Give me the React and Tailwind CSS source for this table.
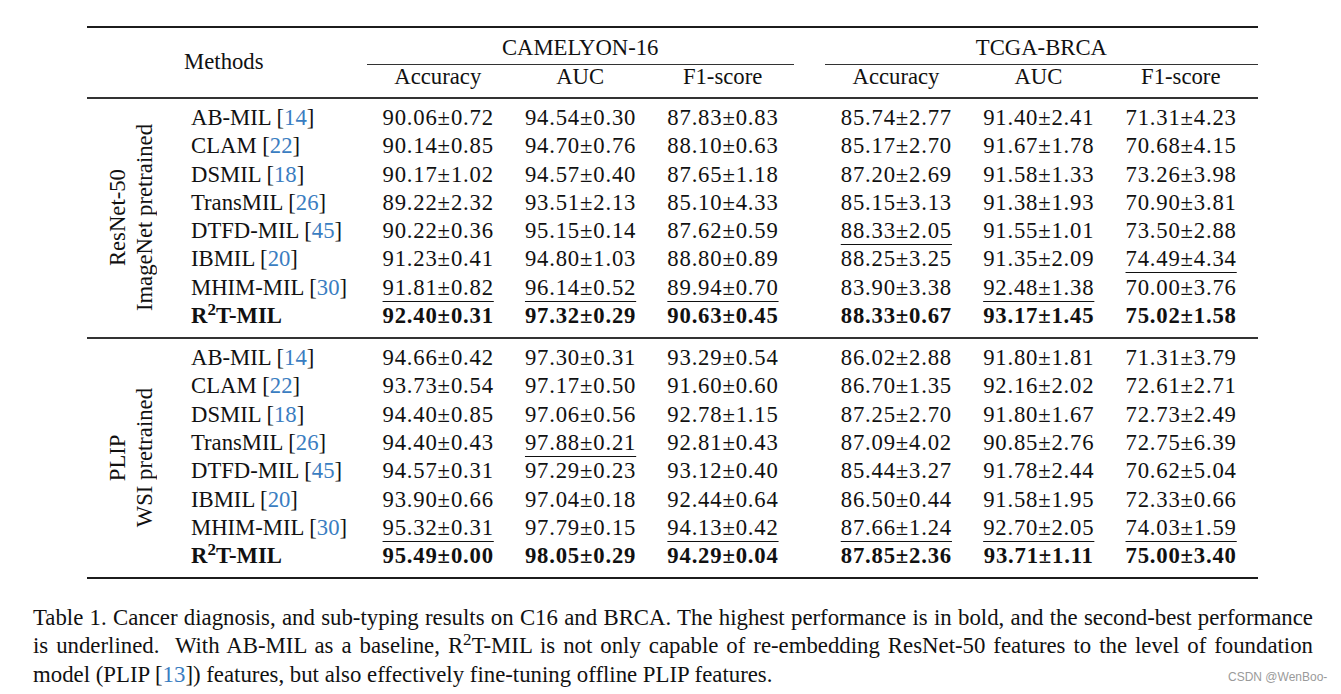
import React from "react";

const groups = [
  {
    label: ["ResNet-50", "ImageNet pretrained"],
    rows: [
      ["AB-MIL", "14", ["90.06±0.72", "94.54±0.30", "87.83±0.83", "85.74±2.77", "91.40±2.41", "71.31±4.23"], []],
      ["CLAM", "22", ["90.14±0.85", "94.70±0.76", "88.10±0.63", "85.17±2.70", "91.67±1.78", "70.68±4.15"], []],
      ["DSMIL", "18", ["90.17±1.02", "94.57±0.40", "87.65±1.18", "87.20±2.69", "91.58±1.33", "73.26±3.98"], []],
      ["TransMIL", "26", ["89.22±2.32", "93.51±2.13", "85.10±4.33", "85.15±3.13", "91.38±1.93", "70.90±3.81"], []],
      ["DTFD-MIL", "45", ["90.22±0.36", "95.15±0.14", "87.62±0.59", "88.33±2.05", "91.55±1.01", "73.50±2.88"], [3]],
      ["IBMIL", "20", ["91.23±0.41", "94.80±1.03", "88.80±0.89", "88.25±3.25", "91.35±2.09", "74.49±4.34"], [5]],
      ["MHIM-MIL", "30", ["91.81±0.82", "96.14±0.52", "89.94±0.70", "83.90±3.38", "92.48±1.38", "70.00±3.76"], [0, 1, 2, 4]],
    ],
    best: ["92.40±0.31", "97.32±0.29", "90.63±0.45", "88.33±0.67", "93.17±1.45", "75.02±1.58"],
  },
  {
    label: ["PLIP", "WSI pretrained"],
    rows: [
      ["AB-MIL", "14", ["94.66±0.42", "97.30±0.31", "93.29±0.54", "86.02±2.88", "91.80±1.81", "71.31±3.79"], []],
      ["CLAM", "22", ["93.73±0.54", "97.17±0.50", "91.60±0.60", "86.70±1.35", "92.16±2.02", "72.61±2.71"], []],
      ["DSMIL", "18", ["94.40±0.85", "97.06±0.56", "92.78±1.15", "87.25±2.70", "91.80±1.67", "72.73±2.49"], []],
      ["TransMIL", "26", ["94.40±0.43", "97.88±0.21", "92.81±0.43", "87.09±4.02", "90.85±2.76", "72.75±6.39"], [1]],
      ["DTFD-MIL", "45", ["94.57±0.31", "97.29±0.23", "93.12±0.40", "85.44±3.27", "91.78±2.44", "70.62±5.04"], []],
      ["IBMIL", "20", ["93.90±0.66", "97.04±0.18", "92.44±0.64", "86.50±0.44", "91.58±1.95", "72.33±0.66"], []],
      ["MHIM-MIL", "30", ["95.32±0.31", "97.79±0.15", "94.13±0.42", "87.66±1.24", "92.70±2.05", "74.03±1.59"], [0, 2, 3, 4, 5]],
    ],
    best: ["95.49±0.00", "98.05±0.29", "94.29±0.04", "87.85±2.36", "93.71±1.11", "75.00±3.40"],
  },
];

const Cells = ({ values, under = [], bold = false }) => (
  <>
    {values.map((v, i) => (
      <React.Fragment key={i}>
        {i === 3 && <div className="w-[31px] shrink-0" />}
        <div className="w-[142.4px] shrink-0 text-center">
          <span
            className={
              "tracking-[0.8px] mr-[-0.8px] " +
              (bold ? "font-bold " : "") +
              (under.includes(i) ? "underline decoration-1 underline-offset-[6px]" : "")
            }
          >
            {v}
          </span>
        </div>
      </React.Fragment>
    ))}
  </>
);

const Row = ({ children }) => (
  <div className="flex h-[28.3px] items-center leading-[28.3px] whitespace-nowrap">{children}</div>
);

const Group = ({ g }) => (
  <div className="flex pt-[5.5px] pb-[6.7px]">
    <div className="w-[87px] shrink-0 flex items-center justify-center">
      <div className="[writing-mode:vertical-rl] rotate-180 text-center leading-[27px] whitespace-nowrap">
        <div>{g.label[0]}</div>
        <div>{g.label[1]}</div>
      </div>
    </div>
    <div>
      {g.rows.map(([name, cite, vals, under]) => (
        <Row key={name}>
          <div className="w-[192.6px] shrink-0 pl-[17px]">
            {name} [<span className="text-[#3a7dc1]">{cite}</span>]
          </div>
          <Cells values={vals} under={under} />
        </Row>
      ))}
      <Row>
        <div className="w-[192.6px] shrink-0 pl-[17px] font-bold">
          R<sup>2</sup>T-MIL
        </div>
        <Cells values={g.best} bold />
      </Row>
    </div>
  </div>
);

const Sub = () => (
  <>
    <div className="w-[142.4px] text-center">Accuracy</div>
    <div className="w-[142.4px] text-center">AUC</div>
    <div className="w-[142.4px] text-center">F1-score</div>
  </>
);

export default function App() {
  return (
    <div className="relative w-[1341px] h-[694px] overflow-hidden bg-white text-[#111] font-['Liberation_Serif',serif] text-[22.7px]">
      <div className="ml-[87px] pt-[26px] w-[1171px]">
        <div className="h-[2px] bg-[#1c1c1c]" />
        {/* header */}
        <div className="flex h-[69px]">
          <div className="w-[279.6px] shrink-0 flex items-center justify-center pr-[6px]">Methods</div>
          <div className="w-[427.2px] shrink-0">
            <div className="pt-[6px] leading-[28px] text-center">CAMELYON-16</div>
            <div className="mt-[2px] h-px bg-[#333]" />
            <div className="flex leading-[24px]">
              <Sub />
            </div>
          </div>
          <div className="w-[31px] shrink-0" />
          <div className="w-[433.2px] shrink-0">
            <div className="pt-[6px] leading-[28px] text-center">TCGA-BRCA</div>
            <div className="mt-[2px] h-px bg-[#333]" />
            <div className="flex leading-[24px]">
              <Sub />
            </div>
          </div>
        </div>
        <div className="h-[1.5px] bg-[#333]" />
        <Group g={groups[0]} />
        <div className="h-[1.5px] bg-[#333]" />
        <Group g={groups[1]} />
        <div className="h-[2px] bg-[#1c1c1c]" />
      </div>

      {/* caption */}
      <div className="ml-[33px] mt-[24.5px] w-[1280px] leading-[28.5px] text-[22.8px]">
        <div className="whitespace-nowrap text-justify [text-align-last:justify]">
          Table 1. Cancer diagnosis, and sub-typing results on C16 and BRCA. The highest performance is in bold, and the second-best performance
        </div>
        <div className="whitespace-nowrap text-justify [text-align-last:justify]">
          is underlined.&nbsp; With AB-MIL as a baseline, R<sup>2</sup>T-MIL is not only capable of re-embedding ResNet-50 features to the level of foundation
        </div>
        <div className="whitespace-nowrap">
          model (PLIP [<span className="text-[#3a7dc1]">13</span>]) features, but also effectively fine-tuning offline PLIP features.
        </div>
      </div>

      <div className="absolute left-[1228px] top-[669px] text-[12px] leading-[16px] text-[#9a9a9a] font-['Liberation_Sans',sans-serif] whitespace-nowrap">
        CSDN @WenBoo-
      </div>
    </div>
  );
}
